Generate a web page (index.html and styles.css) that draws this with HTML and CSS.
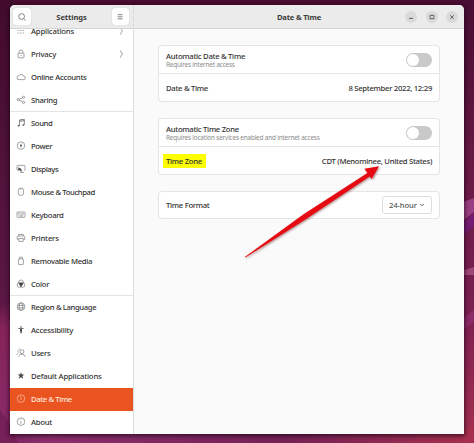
FILE: index.html
```html
<!DOCTYPE html>
<html lang="en">
<head>
<meta charset="utf-8">
<title>Settings</title>
<link rel="stylesheet" href="styles.css">
</head>
<body>
<svg class="wallpaper" viewBox="0 0 474 443" preserveAspectRatio="none" aria-hidden="true">
  <defs>
    <linearGradient id="left" x1="0" y1="0" x2="0" y2="1"><stop offset="0" stop-color="#420b2c"/><stop offset=".68" stop-color="#5b1745"/><stop offset=".74" stop-color="#852359"/><stop offset="1" stop-color="#8c2b6c"/></linearGradient>
    <linearGradient id="right" x1="0" y1="0" x2="0" y2="1"><stop offset="0" stop-color="#480e33"/><stop offset=".4" stop-color="#6a1a46"/><stop offset=".7" stop-color="#7c2052"/><stop offset="1" stop-color="#a6304f"/></linearGradient>
    <linearGradient id="bottom" x1="0" y1="0" x2="1" y2="0"><stop offset="0" stop-color="#78255f"/><stop offset=".1" stop-color="#8c2e6c"/><stop offset=".6" stop-color="#742156"/><stop offset="1" stop-color="#a8304d"/></linearGradient>
  </defs>
  <path fill="#4b0d33" d="M0 0h474v20H0z"/>
  <path fill="url(#left)" d="M0 0h14v443H0z"/>
  <path fill="url(#right)" d="M460 0h14v443h-14z"/>
  <path fill="url(#bottom)" d="M0 430h474v13H0z"/>
  <path fill="#772159" d="M0 410l10 14 8 19H0z"/>
  <path fill="#9a3f82" d="M460 203l14-5v14l-10 8z"/>
  <path fill="#741d72" d="M464 221l10-8v13l-10 9z"/>
  <path fill="#9d4777" d="M464 270l10-3v8h-10z"/>
  <path fill="#8c2a67" d="M464 318l10-8v12l-10 7z"/>
</svg>

<main class="window">
  <aside class="sidebar">
    <header class="bar">
      <button class="tool search" aria-label="Search"><svg viewBox="0 0 10 10"><circle cx="4.6" cy="4.5" r="2.9"/><path d="M6.8 6.7L8.6 8.5"/></svg></button>
      <h1>Settings</h1>
      <button class="tool menu" aria-label="Menu"><svg viewBox="0 0 10 10"><path d="M2.7 2.7h4.8M2.7 4.8h4.8M2.7 6.9h4.8"/></svg></button>
    </header>
    <nav>
      <ul>
        <li><svg viewBox="0 0 10 10"><path stroke-dasharray="1.4 1.1" d="M1.7 2h6.6M1.7 4.5h6.6M1.7 7h6.6"/></svg><span class="loose">Applications</span><svg class="chevron" viewBox="0 0 5 10"><path d="M1.3 1.4Q2 3.4 3.5 5 2 6.6 1.3 8.6"/></svg></li>
        <li><svg viewBox="0 0 10 10"><rect x="2" y="4.2" width="6" height="4.6" rx=".6"/><path d="M3.2 4V2.7a1.8 1.8 0 0 1 3.6 0V4M5 6v1"/></svg><span class="loose">Privacy</span><svg class="chevron" viewBox="0 0 5 10"><path d="M1.3 1.4Q2 3.4 3.5 5 2 6.6 1.3 8.6"/></svg></li>
        <li><svg viewBox="0 0 10 10"><path d="M3 7.6h4.6a1.6 1.6 0 0 0 .3-3.2A2.8 2.8 0 0 0 2.7 4 1.8 1.8 0 0 0 3 7.6z"/></svg><span>Online Accounts</span></li>
        <li><svg viewBox="0 0 10 10"><circle cx="2.2" cy="4.6" r="1.1"/><circle cx="7.5" cy="2.3" r="1.1"/><circle cx="7.5" cy="7.3" r="1.1"/><path d="M3.2 4.2l3.3-1.4M3.2 5.1l3.3 1.6"/></svg><span>Sharing</span></li>
        <li class="rule"></li>
        <li><svg viewBox="0 0 10 10" class="dark"><path d="M3.6 7.7V1.9l4.7-.6v5.6M3.6 3.2l4.7-.6"/><ellipse class="fill" cx="2.6" cy="7.7" rx="1" ry=".8"/><ellipse class="fill" cx="7.3" cy="7" rx="1" ry=".8"/></svg><span class="tight">Sound</span></li>
        <li><svg viewBox="0 0 10 10"><circle cx="5" cy="4.6" r="3.8"/><path class="fill" d="M5.4 2L3.8 5h1l-.2 2.3L6.2 4.3h-1z"/></svg><span class="tight">Power</span></li>
        <li><svg viewBox="0 0 10 10"><path d="M2.5 6.2H1.8a.9.9 0 0 1-.8-.8V2.2a.9.9 0 0 1 .8-.8h6.4a.9.9 0 0 1 .8.8v3.6a.9.9 0 0 1-.8.8"/><path d="M4 8.4h4M5.7 6.8v1.6"/><path class="fill" d="M2.3 3.2v3.5l1.4-.8 1 1.6 1-.7-1-1.3h1.6z"/></svg><span class="tight">Displays</span></li>
        <li><svg viewBox="0 0 10 10"><rect x="2.3" y="1.2" width="5.2" height="7.2" rx="2.1"/><path d="M4.9 1.4v1.5"/></svg><span class="tight">Mouse &amp; Touchpad</span></li>
        <li><svg viewBox="0 0 10 10"><rect x="1" y="2" width="8" height="5.3" rx=".7"/><path stroke-dasharray=".8 .5" d="M2.2 3.6h5.8M2.2 4.8h5.8"/><path d="M3.2 6h3.6"/></svg><span>Keyboard</span></li>
        <li><svg viewBox="0 0 10 10"><path d="M2.7 3V1.4h4.6V3M2.4 6.4H1.2V3.8c0-.5.3-.8.8-.8h6c.5 0 .8.3.8.8v2.6H7.6"/><path d="M2.8 5.5h4.4v2.9H2.8z"/></svg><span class="loose">Printers</span></li>
        <li><svg viewBox="0 0 10 10"><path d="M3.4 3V1.2h3V3M2.4 8V4c0-.6.4-1 1-1h3c.6 0 1 .4 1 1v4c0 .4-.2.6-.6.6H3c-.4 0-.6-.2-.6-.6z"/></svg><span>Removable Media</span></li>
        <li class="short"><svg viewBox="0 0 10 10"><circle cx="5" cy="3.4" r="2.4"/><circle cx="3.5" cy="6" r="2.4"/><circle cx="6.5" cy="6" r="2.4"/><path class="fill" d="M2.9 3.7h4.2L6.4 6 5 7.7 3.6 6z"/></svg><span>Color</span></li>
        <li class="rule"></li>
        <li><svg viewBox="0 0 10 10"><circle cx="5" cy="4.6" r="3.8"/><ellipse cx="5" cy="4.6" rx="1.8" ry="3.8"/><path d="M1.4 3.4h7.2M1.4 5.8h7.2"/></svg><span class="tight">Region &amp; Language</span></li>
        <li><svg viewBox="0 0 10 10" class="dark"><circle class="fill" cx="5" cy="2" r=".8"/><path class="fill" d="M2.4 3.3h5.2v.8H5.9l.2 4.1h-.6L5.1 6h-.3l-.3 2.2h-.6l.2-4.1H2.4z"/></svg><span class="loose">Accessibility</span></li>
        <li><svg viewBox="0 0 10 10"><circle cx="6" cy="3.7" r="1.9"/><path d="M2.9 8.8c.2-1.7 1.3-2.6 3.1-2.6s2.9.9 3.1 2.6"/><path stroke-dasharray="1 .5" d="M4.3 1.3c-1.5-.4-2.5.4-2.3 1.8.1.8.4 1.2.8 1.5C1.7 5 1 5.7.9 7"/></svg><span>Users</span></li>
        <li><svg viewBox="0 0 10 10" class="dark"><path class="fill" d="M5 1.2l.9 2.4h2.5L6.4 5.1l.8 2.6L5 6.2 2.8 7.7l.8-2.6-2-1.5h2.5z"/></svg><span class="loose">Default Applications</span></li>
        <li class="selected"><svg viewBox="0 0 10 10"><circle cx="5" cy="4.6" r="3.8"/><path d="M4.8 2.3v2.5l1.4 1.1"/></svg><span class="tight">Date &amp; Time</span></li>
        <li><svg viewBox="0 0 10 10"><circle cx="5" cy="4.6" r="3.8"/><path d="M5 4.1v2.7M5 2.4v.8"/></svg><span>About</span></li>
      </ul>
    </nav>
  </aside>

  <section class="content">
    <header class="bar">
      <h2>Date &amp; Time</h2>
      <div class="controls">
        <button aria-label="Minimize"><svg viewBox="0 0 12 12"><path d="M4 7.4h4"/></svg></button>
        <button aria-label="Maximize"><svg viewBox="0 0 12 12"><path d="M4.1 4.3h3.8v3.5H4.1z"/></svg></button>
        <button aria-label="Close"><svg viewBox="0 0 12 12"><path d="M4.2 4.3l3.6 3.6M7.8 4.3L4.2 7.9"/></svg></button>
      </div>
    </header>
    <div class="cards">
      <div class="card">
        <div class="row"><div><p>Automatic Date &amp; Time</p><small>Requires internet access</small></div><i class="switch"></i></div>
        <div class="row"><p>Date &amp; Time</p><p>8 September 2022, 12:29</p></div>
      </div>
      <div class="card">
        <div class="row"><div><p>Automatic Time Zone</p><small>Requires location services enabled and internet access</small></div><i class="switch"></i></div>
        <div class="row"><p class="mark">Time Zone</p><p>CDT (Menominee, United States)</p></div>
      </div>
      <div class="card">
        <div class="row"><p>Time Format</p><button class="select"><span>24-hour</span><svg viewBox="0 0 6 6"><path d="M1 2l2 1.8L5 2"/></svg></button></div>
      </div>
    </div>
  </section>
</main>

<svg class="arrow" viewBox="0 0 144 102" aria-hidden="true"><path d="M5.5 97.6L4.8 97 63.5 54.2 127.4 13 124.4 8.8 139 6.2 131.7 19 129.6 16.4 66.5 58.8z"/></svg>
</body>
</html>
```
FILE: styles.css
```css
* { box-sizing: border-box; }
body {
  margin: 0;
  width: 474px;
  height: 443px;
  overflow: hidden;
  padding: 5px 10px 9px;
  background: #5b1540;
  font: 500 7.7px/10px "Noto Sans", "Open Sans", sans-serif;
  letter-spacing: -.29px;
  color: #333;
}
h1, h2, p, ul { margin: 0; padding: 0; list-style: none; }
svg { fill: none; stroke: #666; stroke-width: .6; display: block; }
button { font: inherit; letter-spacing: inherit; color: inherit; padding: 0; border: 0; display: grid; place-items: center; }
span, p, h1, h2, small { white-space: nowrap; }
.tight { letter-spacing: -.39px; }
.loose { letter-spacing: -.18px; }
.wallpaper { position: absolute; inset: 0; width: 474px; height: 443px; stroke: none; z-index: -1; }
.window {
  display: flex;
  width: 454px;
  height: 429px;
  overflow: hidden;
  border-radius: 5px 5px 0 0;
  background: #fafafa;
  box-shadow: 0 1px 4px 1px rgba(20, 0, 15, .65);
}
.sidebar { width: 124px; border-right: 1px solid #ddd; background: #fff; display: flex; flex-direction: column; }
.bar { height: 24px; flex: none; display: flex; align-items: center; background: #ebebeb; border-bottom: 1px solid #d5d5d5; }
.sidebar .bar { justify-content: space-between; padding: 0 4px 0 3px; }
h1, h2 { font-size: 7.6px; line-height: 10px; font-weight: 700; letter-spacing: -.1px; color: #3c3c3c; }
h2 { letter-spacing: -.2px; }
.tool { width: 17px; height: 17px; background: #fff; border-radius: 3px; box-shadow: 0 0 1px #aaa; }
.search { width: 18px; }
.tool svg { width: 10px; height: 10px; stroke-width: .8; }
nav { flex: 1; overflow: hidden; }
ul { margin-top: -10px; }
li { height: 23px; display: flex; align-items: center; padding: 0 9px 0 6px; }
.rule ~ li:not(.rule) { padding-bottom: 1px; }
li > svg { width: 10px; height: 10px; margin-right: 5px; flex: none; }
li > .chevron { width: 5px; margin: 0 0 0 auto; }
.dark { stroke: #333; }
.fill { fill: #444; stroke: none; }
.rule { height: 1px; background: #e4e4e4; }
.short { height: 22px; }
.selected { background: #e95420; color: #ffe5d8; }
.selected svg { stroke: #ffd2bd; }
.content { flex: 1; }
.content .bar { position: relative; justify-content: center; }
.controls { position: absolute; right: 6px; display: flex; gap: 8.5px; }
.controls button { width: 12px; height: 12px; border-radius: 50%; background: #dadada; }
.controls svg { width: 12px; height: 12px; stroke: #444; stroke-width: .8; }
.cards { padding: 16px 24px 0 24px; display: grid; gap: 16px; }
.card { width: 282px; background: #fff; border: 1px solid #e5e5e5; border-radius: 4px; box-shadow: 0 0 1px #eee; }
.row { height: 28px; padding: 0 7px; display: flex; align-items: center; justify-content: space-between; }
.card .row:first-child:not(:last-child) { border-bottom: 1px solid #e5e5e5; }
.card .row:last-child { height: 27px; }
.card .row:only-child { height: 26px; }
.row > div { padding-top: 1px; }
.row > div p { line-height: 9px; }
small { display: block; font-size: 6.4px; line-height: 7px; font-weight: 400; letter-spacing: -.18px; color: #8b8b8b; }
.switch { width: 26px; height: 14px; padding: 1px; border-radius: 7px; background: #c9c9c9; }
.switch::before { content: ""; display: block; width: 12px; height: 12px; border-radius: 50%; background: #fff; }
.mark { background: #fcff00; padding: 2px 4px 2px 3px; margin-left: -3px; }
.select { width: 50px; height: 18px; display: flex; justify-content: space-between; padding: 0 6px; background: #fff; border: 1px solid #ddd; border-radius: 3px; align-items: center; color: #555; letter-spacing: -.15px; }
.select svg { width: 6px; height: 6px; stroke-width: .9; }
.arrow { position: absolute; left: 240px; top: 160px; width: 144px; height: 102px; stroke: none; filter: drop-shadow(1px 1px 1px rgba(90, 0, 0, .45)); }
.arrow path { fill: #e60b12; }
```
